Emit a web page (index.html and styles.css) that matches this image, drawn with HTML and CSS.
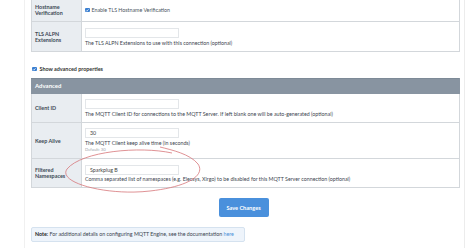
FILE: index.html
```html
<!DOCTYPE html>
<html>
<head>
<meta charset="utf-8">
<link rel="stylesheet" href="styles.css">
</head>
<body>
<div class="page">
  <table class="grid top">
    <tr class="r-host">
      <th>Hostname<br>Verification</th>
      <td><span class="cb"><svg viewBox="0 0 10 10"><path d="M2.2 5.2 L4.2 7.2 L7.9 2.9" /></svg></span><span class="cbtext">Enable TLS Hostname Verification</span></td>
    </tr>
    <tr class="r-alpn">
      <th>TLS ALPN<br>Extensions</th>
      <td><div class="inp"></div><div class="help">The TLS ALPN Extensions to use with this connection (optional)</div></td>
    </tr>
  </table>

  <div class="adv-toggle"><span class="cb"><svg viewBox="0 0 10 10"><path d="M2.2 5.2 L4.2 7.2 L7.9 2.9" /></svg></span><span class="adv-label">Show advanced properties</span></div>

  <table class="grid adv">
    <tr class="head"><th colspan="2">Advanced</th></tr>
    <tr class="r-client">
      <th>Client ID</th>
      <td><div class="inp"></div><div class="help">The MQTT Client ID for connections to the MQTT Server. If left blank one will be auto-generated (optional)</div></td>
    </tr>
    <tr class="r-keep">
      <th>Keep Alive</th>
      <td><div class="inp">30</div><div class="help">The MQTT Client keep alive time (in seconds)</div><div class="default">Default: 30</div></td>
    </tr>
    <tr class="r-filter">
      <th>Filtered<br>Namespaces</th>
      <td><div class="inp">Sparkplug B</div><div class="help tight">Comma separated list of namespaces (e.g. Elecsys, Xirgo) to be disabled for this MQTT Server connection (optional)</div></td>
    </tr>
  </table>

  <div class="actions"><button class="save">Save Changes</button></div>

  <div class="note"><b>Note:</b> For additional details on configuring MQTT Engine, see the documentation <a>here</a></div>
</div>
<svg class="annot" viewBox="0 0 474 248" width="474" height="248"><path d="M172 153 C140 146, 82 151, 67 169 C57 183, 108 196, 150 191 C186 187, 206 176, 198 164 C190 154, 172 150, 160 147" /></svg>
</body>
</html>
```

FILE: styles.css
```css
html, body {
  margin: 0;
  padding: 0;
  background: #ffffff;
}
body {
  width: 474px;
  height: 248px;
  overflow: hidden;
  position: relative;
  font-family: "Lato", "Open Sans", sans-serif;
  color: #333a40;
}
.page {
  margin-left: 24px;
  width: 441px;
  height: 260px;
  border-left: 1px solid #f0f0f0;
  border-right: 1px solid #ececec;
  padding: 0 5px 0 6px;
  box-sizing: border-box;
  margin-top: -3px;
}
.grid {
  width: 429px;
  border-collapse: collapse;
  font-size: 5.3px;
}
.grid th, .grid td {
  border: 1px solid #d3d7db;
  text-align: left;
  vertical-align: middle;
}
.grid th {
  width: 46px;
  background: #e9edf1;
  color: #3e4a56;
  font-weight: 700;
  font-size: 5.4px;
  line-height: 6px;
  padding: 0 0 0 3px;
}
.grid td {
  background: #ffffff;
  padding: 0 0 0 3px;
}
.r-host { height: 24px; }
.r-alpn { height: 30px; }
.r-client { height: 29px; }
.r-keep { height: 36px; }
.r-filter { height: 29px; }
.cb {
  display: inline-block;
  width: 4.5px;
  height: 4.5px;
  background: #3b7fd0;
  border-radius: 1px;
  vertical-align: middle;
  margin-right: 2px;
}
.cb svg {
  display: block;
  width: 4.5px;
  height: 4.5px;
}
.cb path {
  fill: none;
  stroke: #fff;
  stroke-width: 1.6;
}
.cbtext {
  vertical-align: middle;
  font-size: 5.3px;
  color: #4a5560;
}
.inp {
  width: 94px;
  height: 10px;
  box-sizing: border-box;
  border: 1px solid #e3e6e9;
  background: #fff;
  font-size: 5.3px;
  line-height: 8px;
  padding-left: 4px;
  color: #444;
}
.help {
  font-size: 5.3px;
  line-height: 6px;
  margin-top: 2px;
  color: #3d4650;
  white-space: nowrap;
}
.help.tight { margin-top: 1px; }
.default {
  font-size: 4.2px;
  line-height: 6px;
  color: #9aa3ab;
  margin-top: 1px;
}
.adv-toggle {
  margin-top: 14px;
  height: 6px;
  display: flex;
  align-items: center;
  font-size: 5.4px;
  font-weight: 700;
  color: #333;
}
.adv-toggle .cb { margin-left: 1px; margin-right: 3px; }
.adv {
  margin-top: 6px;
}
.adv .head th {
  background: #8894a1;
  color: #ffffff;
  height: 14px;
  font-size: 6px;
  padding-left: 3px;
  border-color: #8894a1;
  border-top: 1px solid #7d8a97;
}
.actions {
  display: flex;
  justify-content: center;
  margin-top: 10px;
  padding-right: 3px;
}
.save {
  width: 50px;
  height: 19px;
  border: none;
  border-radius: 2px;
  background: #4a90dc;
  color: #fff;
  font-family: "Lato", "Open Sans", sans-serif;
  font-weight: 700;
  font-size: 5.6px;
  padding: 0;
}
.note {
  margin-top: 10px;
  width: 214px;
  height: 15px;
  box-sizing: border-box;
  background: #eef4fb;
  border: 1px solid #d5e2ef;
  border-radius: 2px;
  font-size: 5.3px;
  line-height: 13px;
  padding-left: 3px;
  color: #3b4550;
  white-space: nowrap;
}
.note b { color: #222; }
.note a { color: #4a8fd8; }
.annot {
  position: absolute;
  left: 0;
  top: 0;
  pointer-events: none;
}
.annot path {
  fill: none;
  stroke: #d7767a;
  stroke-width: 0.8;
}
```
